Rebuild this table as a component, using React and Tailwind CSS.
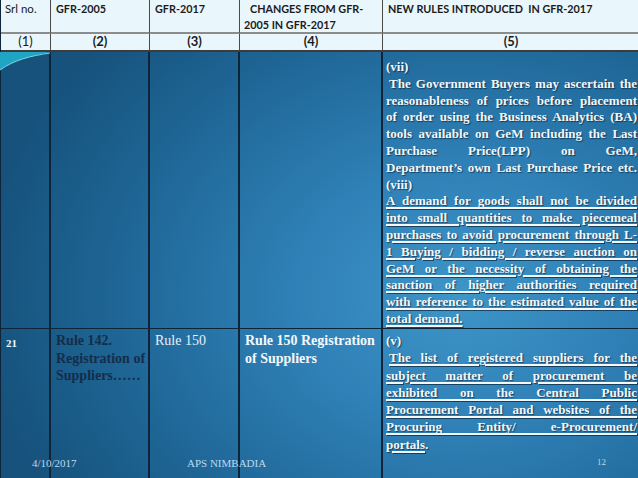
import React from "react";

const serif = "font-['Liberation_Serif',serif]";

// one justified line of the slide text
const Line = ({ children, last = false, className = "" }) => (
  <div
    className={
      "whitespace-nowrap " +
      (last ? "text-left " : "text-justify [text-align-last:justify] ") +
      className
    }
  >
    {children}
  </div>
);

const HeadCell = ({ children, className = "" }) => (
  <div
    className={
      "bg-[#e9f6fb] border-r border-[#4a4a4a] border-b-2 border-b-[#8c8c8c] text-[10.8px] leading-[16px] text-[#1b1b1b] " +
      className
    }
  >
    {children}
  </div>
);

const NumCell = ({ children, className = "" }) => (
  <div
    className={
      "bg-[#e9f6fb] border-r border-[#4a4a4a] border-b-2 border-b-[#3c3c3c] flex items-center justify-center text-[13px] font-bold text-[#1b1b1b] " +
      className
    }
  >
    {children}
  </div>
);

const BodyCell = ({ children, className = "" }) => (
  <div className={"border-r-2 border-[#0e2539] " + className}>{children}</div>
);

export default function App() {
  return (
    <div className="relative w-[638px] h-[478px] overflow-hidden bg-[radial-gradient(ellipse_75%_80%_at_72%_62%,#3d95c8_0%,#2f80b6_35%,#1f6797_70%,#16527c_100%)] font-['Lato',sans-serif]">
      <div className="grid grid-cols-[50px_99px_90px_143px_256px] grid-rows-[34px_18px_277px_1fr] h-full border-l border-[#0e2539]">
        {/* header */}
        <HeadCell className="pl-[4px] pt-[1px] font-normal text-[11.5px]">Srl no.</HeadCell>
        <HeadCell className="pl-[5px] pt-[1px] font-bold">GFR-2005</HeadCell>
        <HeadCell className="pl-[5px] pt-[1px] font-bold">GFR-2017</HeadCell>
        <HeadCell className="pl-[4px] pt-[1px] font-bold">
          <span className="pl-[6px]">CHANGES FROM GFR-</span>
          <br />
          2005 IN GFR-2017
        </HeadCell>
        <HeadCell className="pl-[5px] pt-[1px] font-bold border-r-0">
          NEW RULES INTRODUCED&nbsp; IN GFR-2017
        </HeadCell>

        <NumCell className="font-normal">(1)</NumCell>
        <NumCell>(2)</NumCell>
        <NumCell>(3)</NumCell>
        <NumCell>(4)</NumCell>
        <NumCell className="border-r-0">(5)</NumCell>

        {/* row with (vii) / (viii) */}
        <BodyCell className="border-b border-b-[#0e2539]" />
        <BodyCell className="border-b border-b-[#0e2539]" />
        <BodyCell className="border-b border-b-[#0e2539]" />
        <BodyCell className="border-b border-b-[#0e2539]" />
        <div
          className={
            "min-w-0 border-b border-b-[#0e2539] pl-[3px] pr-[2px] pt-[7px] text-[13px] leading-[16.8px] font-bold text-[#f4f8fb] [text-shadow:1px_1px_1px_rgba(0,20,40,0.6)] " +
            serif
          }
        >
          <Line last>(vii)</Line>
          <Line className="pl-[3px]">The Government Buyers may ascertain the</Line>
          <Line>reasonableness of prices before placement</Line>
          <Line>of order using the Business Analytics (BA)</Line>
          <Line>tools available on GeM including the Last</Line>
          <Line>Purchase Price(LPP) on GeM,</Line>
          <Line>Department’s own Last Purchase Price etc.</Line>
          <Line last>(viii)</Line>
          <div className="underline decoration-[1.5px] underline-offset-[2px]">
            <Line>A demand for goods shall not be divided</Line>
            <Line>into small quantities to make piecemeal</Line>
            <Line>purchases to avoid procurement through L-</Line>
            <Line>1 Buying / bidding / reverse auction on</Line>
            <Line>GeM or the necessity of obtaining the</Line>
            <Line>sanction of higher authorities required</Line>
            <Line>with reference to the estimated value of the</Line>
            <Line last>total demand.</Line>
          </div>
        </div>

        {/* row 21 */}
        <BodyCell
          className={
            "pl-[5px] pt-[6px] text-[11px] font-bold text-[#f2f6fa] " + serif
          }
        >
          21
        </BodyCell>
        <BodyCell
          className={
            "pl-[5px] pt-[3px] text-[14px] leading-[17.5px] font-bold text-[#142d4a] " +
            serif
          }
        >
          Rule 142.
          <br />
          Registration of
          <br />
          Suppliers……
        </BodyCell>
        <BodyCell
          className={
            "pl-[5px] pt-[3px] text-[14px] leading-[17.5px] text-[#e6f0f8] " +
            serif
          }
        >
          Rule 150
        </BodyCell>
        <BodyCell
          className={
            "pl-[5px] pt-[3px] text-[14px] leading-[17.5px] font-bold text-[#f4f8fb] " +
            serif
          }
        >
          Rule 150 Registration
          <br />
          of Suppliers
        </BodyCell>
        <div
          className={
            "min-w-0 pl-[3px] pr-[2px] pt-[3px] text-[13px] leading-[17.3px] font-bold text-[#f4f8fb] [text-shadow:1px_1px_1px_rgba(0,20,40,0.6)] " +
            serif
          }
        >
          <Line last>(v)</Line>
          <div className="underline decoration-[1.5px] underline-offset-[2px]">
            <Line className="pl-[3px]">The list of registered suppliers for the</Line>
            <Line>subject matter of procurement be</Line>
            <Line>exhibited on the Central Public</Line>
            <Line>Procurement Portal and websites of the</Line>
            <Line>Procuring Entity/ e-Procurement/</Line>
            <Line last>
              portals<span className="no-underline inline-block">.</span>
            </Line>
          </div>
        </div>
      </div>

      {/* swoosh decoration under the header */}
      <svg
        className="absolute left-0 top-[52px]"
        width="50"
        height="20"
        viewBox="0 0 50 20"
      >
        <path d="M0 0 L50 0 C32 4 14 8 0 18 Z" fill="#1fa6c4" />
        <path d="M0 18 C14 8 30 4 50 1" stroke="#7fd3e6" strokeWidth="1" fill="none" />
      </svg>

      {/* slide footer */}
      <div
        className={
          "absolute left-0 top-[455px] w-full h-[16px] text-[11px] text-[#bcd9ee] " +
          serif
        }
      >
        <span className="absolute left-[32px]">4/10/2017</span>
        <span className="absolute left-[187px]">APS NIMBADIA</span>
        <span className="absolute left-[597px] text-[9px] top-[1px]">12</span>
      </div>
    </div>
  );
}
